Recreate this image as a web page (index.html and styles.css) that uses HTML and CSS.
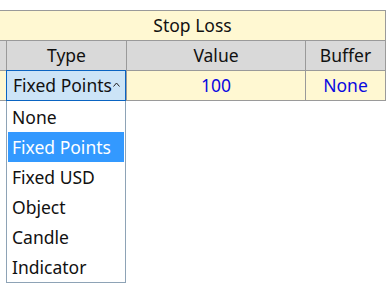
FILE: index.html
```html
<!DOCTYPE html>
<html>
  <head>
    <meta charset="utf-8" />
    <title>Stop Loss</title>
    <link rel="stylesheet" href="styles.css">
  </head>
  <body>
    <div class="sheet">
      <div class="title">Stop Loss</div>
      <div class="row head">
        <div class="cell stub"></div>
        <div class="cell">Type</div>
        <div class="cell">Value</div>
        <div class="cell last">Buffer</div>
      </div>
      <div class="row data">
        <div class="cell stub"></div>
        <div class="cell editing">
          <div class="editor">
            <span>Fixed Points</span>
            <svg class="caret" width="7" height="5" viewBox="0 0 7 5"><polyline points="0.5,4.5 3.5,1 6.5,4.5" fill="none" stroke="#222" stroke-width="1"/></svg>
          </div>
          <ul class="dropdown">
            <li>None</li>
            <li class="selected">Fixed Points</li>
            <li>Fixed USD</li>
            <li>Object</li>
            <li>Candle</li>
            <li>Indicator</li>
          </ul>
        </div>
        <div class="cell value">100</div>
        <div class="cell value last">None</div>
      </div>
    </div>
  </body>
</html>
```

FILE: styles.css
```css
html, body {
  height: 100%;
}
body {
  margin: 0;
  padding-top: 10px;
  box-sizing: border-box;
  font-family: "Noto Sans", "Open Sans", sans-serif;
  font-size: 17.5px;
  color: #111;
  background: #fff;
}
.sheet {
  width: 386px;
  border-top: 1px solid #9a9a9a;
  border-right: 1px solid #9a9a9a;
  box-sizing: border-box;
}
.title {
  height: 29px;
  line-height: 29px;
  text-align: center;
  background: #fff8d2;
  border-bottom: 1px solid #9a9a9a;
}
.row {
  display: grid;
  grid-template-columns: 6px 119px 178px 79px;
  column-gap: 1px;
  background: #9a9a9a;
  border-bottom: 1px solid #9a9a9a;
  height: 29px;
  box-sizing: content-box;
}
.cell {
  line-height: 29px;
  text-align: center;
}
.head .cell {
  background: #d9d9d9;
}
.data .cell {
  background: #fff8d2;
}
.value {
  color: #0a0ae0;
}
.editing {
  position: relative;
}
.editor {
  position: absolute;
  top: -1px;
  left: -1px;
  right: 0;
  bottom: -1px;
  z-index: 2;
  border: 1px solid #0a64c2;
  background: #cce4f7;
  display: flex;
  align-items: center;
  padding-left: 6px;
}
.caret {
  margin-left: 1px;
  margin-top: -2px;
}
.dropdown {
  position: absolute;
  top: 29px;
  left: -1px;
  width: 120px;
  box-sizing: border-box;
  margin: 0;
  padding: 1px 1px 0;
  list-style: none;
  background: #fff;
  border: 1px solid #8ea3b6;
  text-align: left;
  z-index: 1;
}
.dropdown li {
  height: 30px;
  line-height: 30px;
  padding-left: 4px;
  color: #111;
}
.dropdown .selected {
  background: #3399ff;
  color: #fff;
}
```
